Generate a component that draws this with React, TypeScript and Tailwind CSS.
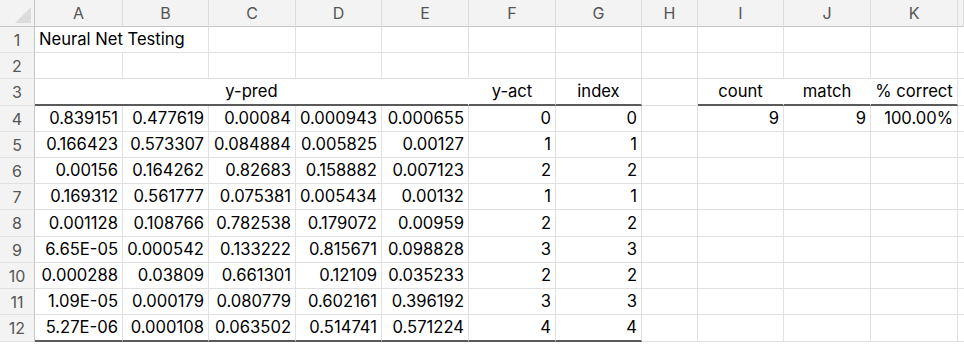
import React from "react";

const GRID =
  "grid grid-cols-[35px_88px_86px_87px_86px_87px_87px_86px_56px_86px_87px_87px_6px]";

const letters = ["A", "B", "C", "D", "E", "F", "G", "H", "I", "J", "K", ""];

const rows: string[][] = [
  ["0.839151", "0.477619", "0.00084", "0.000943", "0.000655", "0", "0"],
  ["0.166423", "0.573307", "0.084884", "0.005825", "0.00127", "1", "1"],
  ["0.00156", "0.164262", "0.82683", "0.158882", "0.007123", "2", "2"],
  ["0.169312", "0.561777", "0.075381", "0.005434", "0.00132", "1", "1"],
  ["0.001128", "0.108766", "0.782538", "0.179072", "0.00959", "2", "2"],
  ["6.65E-05", "0.000542", "0.133222", "0.815671", "0.098828", "3", "3"],
  ["0.000288", "0.03809", "0.661301", "0.12109", "0.035233", "2", "2"],
  ["1.09E-05", "0.000179", "0.080779", "0.602161", "0.396192", "3", "3"],
  ["5.27E-06", "0.000108", "0.063502", "0.514741", "0.571224", "4", "4"],
];

const cell = "flex items-center px-1 border-r border-b border-[#e1e1e1] whitespace-nowrap";
const dark = "border-b-2 border-b-[#5a5a5a]";

const RowNum = ({ n }: { n: number }) => (
  <div className="flex items-center justify-center border-r border-b border-r-[#c6c6c6] border-b-[#e1e1e1] bg-[#f3f3f3] text-[#555] text-[16px]">
    {n}
  </div>
);

const App = () => {
  return (
    <div className="w-[964px] h-[345px] overflow-hidden bg-white text-[16.6px] text-black font-['Inter','Liberation_Sans',sans-serif]">
      {/* column letters */}
      <div className={`${GRID} h-[27px] bg-[#f3f3f3] text-[#555] text-[16px]`}>
        <div className="relative border-r border-b border-[#c6c6c6]">
          <div className="absolute right-[3px] bottom-[3px] w-0 h-0 border-l-[16px] border-l-transparent border-b-[16px] border-b-[#dcdcdc]" />
        </div>
        {letters.map((l, i) => (
          <div
            key={i}
            className="flex items-center justify-center border-r border-b border-r-[#dcdcdc] border-b-[#c6c6c6]"
          >
            {l}
          </div>
        ))}
      </div>

      {/* row 1 */}
      <div className={`${GRID} h-[26px]`}>
        <RowNum n={1} />
        <div className={`${cell} col-span-2`}>Neural Net Testing</div>
        {Array.from({ length: 10 }).map((_, i) => (
          <div key={i} className={cell} />
        ))}
      </div>

      {/* row 2 */}
      <div className={`${GRID} h-[26px]`}>
        <RowNum n={2} />
        {Array.from({ length: 12 }).map((_, i) => (
          <div key={i} className={cell} />
        ))}
      </div>

      {/* row 3 */}
      <div className={`${GRID} h-[27px]`}>
        <RowNum n={3} />
        <div className={`${cell} ${dark} col-span-5 justify-center border-r-transparent`}>y-pred</div>
        <div className={`${cell} ${dark} justify-center`}>y-act</div>
        <div className={`${cell} ${dark} justify-center`}>index</div>
        <div className={cell} />
        <div className={`${cell} ${dark} justify-center border-r-transparent`}>count</div>
        <div className={`${cell} ${dark} justify-center border-r-transparent`}>match</div>
        <div className={`${cell} ${dark} justify-center`}>% correct</div>
        <div className={cell} />
      </div>

      {rows.map((r, ri) => {
        const last = ri === rows.length - 1;
        return (
          <div key={ri} className={`${GRID} ${ri === 4 ? "h-[27px]" : "h-[26px]"}`}>
            <RowNum n={ri + 4} />
            {r.map((v, ci) => (
              <div key={ci} className={`${cell} justify-end ${last ? dark : ""}`}>
                {v}
              </div>
            ))}
            <div className={cell} />
            <div className={`${cell} justify-end`}>{ri === 0 ? "9" : ""}</div>
            <div className={`${cell} justify-end`}>{ri === 0 ? "9" : ""}</div>
            <div className={`${cell} justify-end`}>{ri === 0 ? "100.00%" : ""}</div>
            <div className={cell} />
          </div>
        );
      })}
    </div>
  );
};

export default App;
